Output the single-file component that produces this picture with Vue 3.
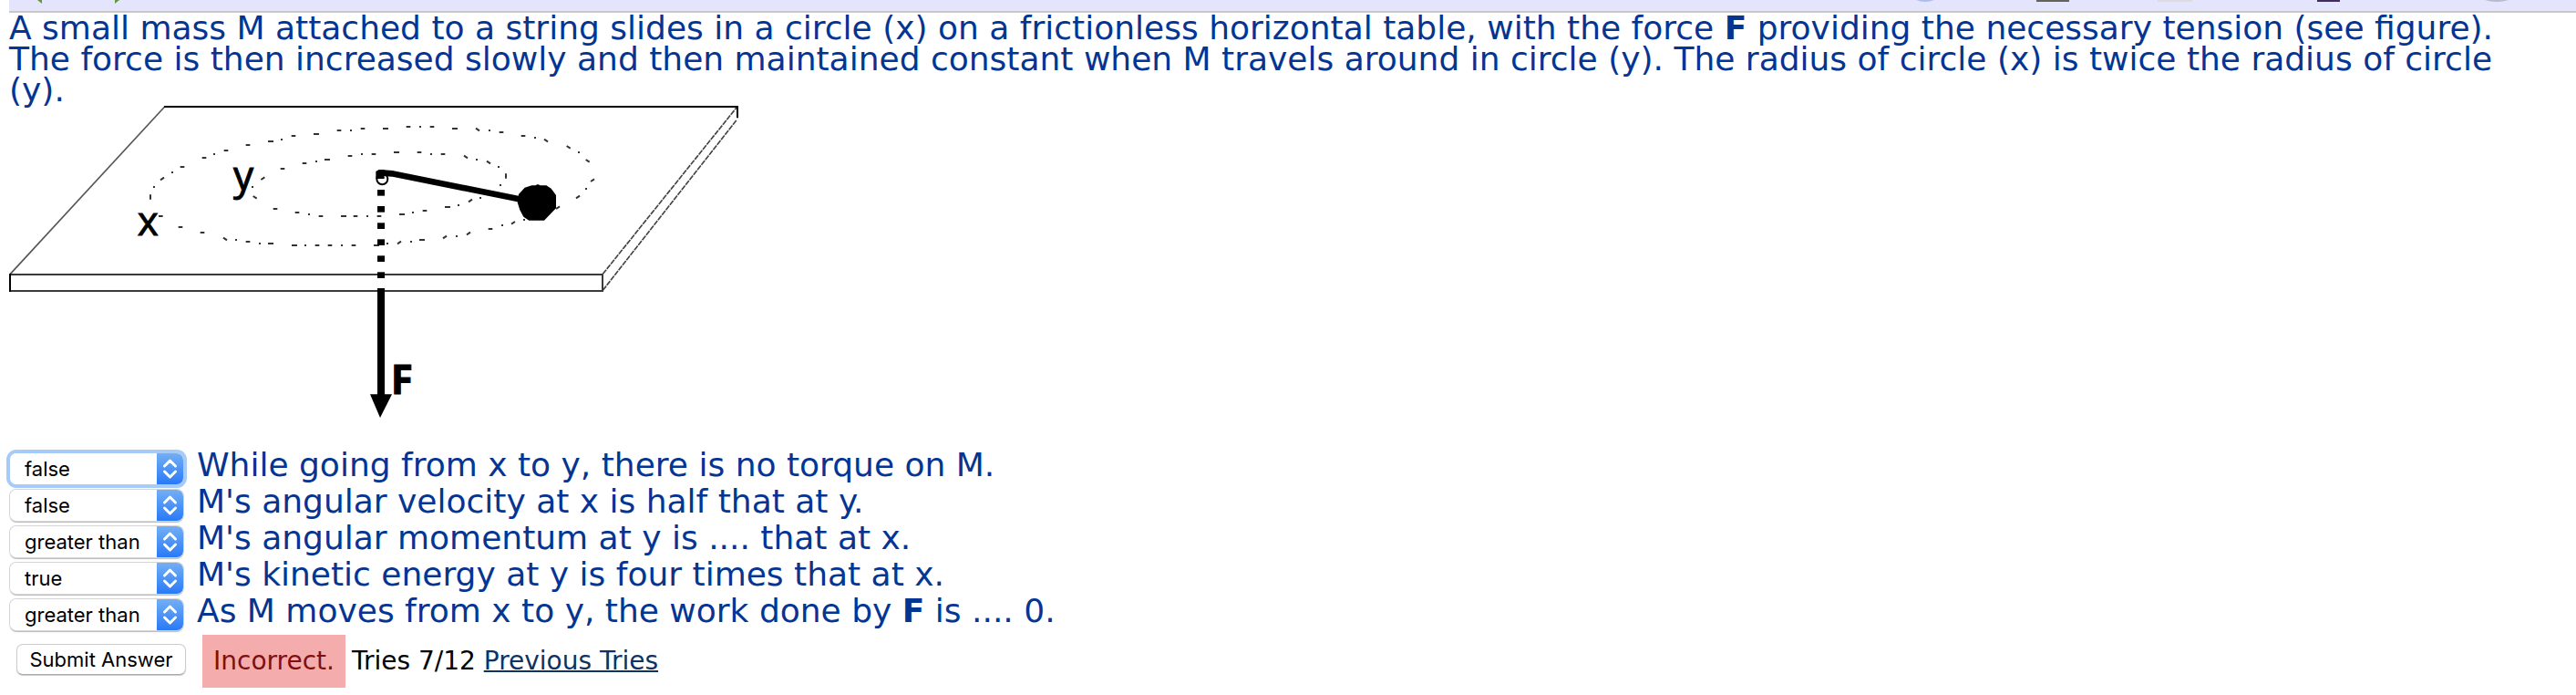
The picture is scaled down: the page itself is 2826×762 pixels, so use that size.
<script setup>
import { ref } from 'vue'

const choices = ['true', 'false', 'greater than', 'less than', 'equal to']

const questions = ref([
  { id: 'torque', answer: 'false', focused: true, parts: ['While going from x to y, there is no torque on M.'] },
  { id: 'velocity', answer: 'false', parts: ["M's angular velocity at x is half that at y."] },
  { id: 'momentum', answer: 'greater than', parts: ["M's angular momentum at y is .... that at x."] },
  { id: 'energy', answer: 'true', parts: ["M's kinetic energy at y is four times that at x."] },
  { id: 'work', answer: 'greater than', parts: ['As M moves from x to y, the work done by ', 'F', ' is .... 0.'] }
])

// Orbit marks: [x, y, kind]
// o = dot, d = dash, w = wide dash, v = vertical, s = rising, b = falling
const marks = [
  [495, 348, 'v'], [507, 315, 'o'], [534, 288, 's'], [567, 267, 'o'], [600, 249, 'd'],
  [672, 219, 'd'], [705, 207, 'o'], [744, 195, 'd'], [816, 177, 'd'], [891, 165, 'w'],
  [927, 159, 'o'], [966, 147, 'd'], [1041, 141, 'w'], [1116, 129, 'd'], [1155, 129, 'o'],
  [1194, 123, 'd'], [1269, 123, 'w'], [1344, 117, 'd'], [1383, 117, 'o'], [1422, 117, 'd'],
  [1497, 123, 'w'], [1572, 126, 'b'], [1611, 129, 'o'], [1650, 135, 'd'], [1722, 147, 'd'],
  [1761, 153, 'o'], [1797, 162, 'b'], [1871, 184, 'b'], [1905, 201, 'o'], [1934, 229, 'b'],
  [1950, 293, 's'], [1929, 321, 'o'], [1902, 348, 's'], [1836, 383, 's'], [1725, 423, 'o'],
  [1689, 433, 's'], [1653, 441, 'o'], [1614, 453, 'd'], [1542, 468, 's'], [1503, 477, 'o'],
  [1464, 480, 's'], [1389, 489, 'w'], [1353, 495, 'o'], [1314, 498, 's'], [1275, 501, 'o'],
  [1239, 507, 'w'], [1164, 507, 'd'], [1125, 507, 'o'], [1086, 507, 'd'], [1044, 507, 'd'],
  [1005, 507, 'o'], [969, 507, 'w'], [891, 501, 'w'], [855, 501, 'o'], [816, 495, 'd'],
  [777, 489, 'o'], [741, 486, 'b'], [666, 465, 'd'], [594, 447, 'd'], [529, 411, 'd'],
  [831, 315, 'o'], [865, 287, 's'], [930, 255, 'd'], [1002, 237, 'd'], [1041, 231, 'o'],
  [1077, 225, 'w'], [1152, 213, 'd'], [1191, 207, 'o'], [1230, 207, 'd'], [1305, 201, 'w'],
  [1380, 201, 'd'], [1419, 207, 'o'], [1458, 207, 'd'], [1533, 216, 'b'], [1569, 225, 'o'],
  [1608, 234, 'b'], [1641, 249, 'o'], [1665, 279, 'v'], [1647, 309, 'o'], [1581, 351, 'o'],
  [1548, 360, 's'], [1509, 375, 'o'], [1473, 381, 'w'], [1398, 393, 'd'], [1359, 399, 'o'],
  [1323, 405, 'w'], [1248, 411, 'd'], [1209, 411, 'o'], [1170, 411, 'd'], [1131, 411, 'w'],
  [1056, 411, 'd'], [1017, 405, 'o'], [978, 399, 'd'], [906, 387, 'd'], [839, 349, 'b']
]

const strokes = {
  o: 'm-3 0h6',
  d: 'm-7 0h14',
  w: 'm-9 0h18',
  v: 'm0 -8v16',
  s: 'm-6 4l12 -8',
  b: 'm-6 -4l12 8'
}

const orbitPath = marks.map(([x, y, kind]) => `M${x} ${y}${strokes[kind]}`).join('')
const cordTops = [324, 378, 433, 487, 541, 595]
</script>

<template>
  <main class="page">
    <div class="toolbar">
      <svg class="tool arrows" viewBox="0 0 100 5" aria-hidden="true">
        <path d="M6 0h5v4z" fill="#659640" />
        <path d="M91 0h5l-5 4z" fill="#659640" />
      </svg>
      <svg class="tool icons" viewBox="0 0 660 3" aria-hidden="true">
        <path d="M6 0h20q-10 4-20 0z" fill="#adbdf0" />
        <path d="M138 0h36v2h-36z" fill="#65645b" />
        <path d="M271 0h38v2h-38z" fill="#dcdce0" />
        <path d="M446 0h25v2h-25z" fill="#432c62" />
        <path d="M630 0h26q-13 4-26 0z" fill="#b9b9cc" />
      </svg>
    </div>

    <p class="problem">
      A small mass M attached to a string slides in a circle (x) on a frictionless horizontal table,
      with the force <b>F</b> providing the necessary tension (see figure).<br>
      The force is then increased slowly and then maintained constant when M travels around in circle
      (y). The radius of circle (x) is twice the radius of circle (y).
    </p>

    <svg class="figure" viewBox="30 48 2400 1032" role="img" aria-label="Mass on a table pulled by a force through a string">
      <g fill="none">
        <path d="M34 601L542 51" stroke="#555" stroke-width="5" />
        <path d="M1984 601L2424 54M1984 655L2424 95" stroke="#444" stroke-width="5" stroke-dasharray="18 3" />
        <path d="M540 51H2428" stroke="#000" stroke-width="6" />
        <path d="M2427 48V88" stroke="#000" stroke-width="6" />
        <path d="M33 603H1983V657H33" stroke="#3a3a3a" stroke-width="6" />
        <path d="M33 600V660" stroke="#000" stroke-width="6" />
        <path :d="orbitPath" stroke="#333" stroke-width="6" />
        <circle cx="1258" cy="289" r="18" stroke="#000" stroke-width="6" />
        <path d="M1254 268L1290 271L1716 356" stroke="#000" stroke-width="20" />
      </g>
      <path d="M1237 264l10 -6h18v30h-28z" />
      <rect v-for="top in cordTops" :key="top" x="1242" :y="top" width="24" height="20" />
      <path d="M1242 648h24v349h24l-39 77l-33 -77h24z" />
      <path d="M1750 310h12l8 -4l8 4h20l16 10l16 22v43l-29 30l-10 10h-50l-18 -12l-12 -22l-8 -26l4 -26l20 -22z" />
      <text class="mark" x="452" y="473">x</text>
      <text class="mark" x="768" y="325">y</text>
      <text class="mark strong" x="1286" y="995">F</text>
    </svg>

    <form @submit.prevent>
      <div v-for="q in questions" :key="q.id" class="question">
        <span class="picker" :class="{ focused: q.focused }">
          <select :id="q.id" v-model="q.answer">
            <option v-for="c in choices" :key="c">{{ c }}</option>
          </select>
          <svg class="chevrons" viewBox="0 0 29 34" aria-hidden="true">
            <path d="M8.500 14l6 -6l6 6M8.500 20l6 6l6 -6" />
          </svg>
        </span>
        <label :for="q.id"><template v-for="(part, i) in q.parts" :key="i"><b v-if="i === 1">{{ part }}</b><template v-else>{{ part }}</template></template></label>
      </div>

      <div class="result">
        <button type="submit">Submit Answer</button>
        <strong class="verdict">Incorrect.</strong>
        <span class="tries">Tries 7/12 <a href="#">Previous Tries</a></span>
      </div>
    </form>
  </main>
</template>

<style>
body {
  margin: 0;
  background: #fff;
}
</style>

<style scoped>
.page {
  padding-left: 10px;
  font-family: Verdana, "DejaVu Sans", sans-serif;
  color: #053592;
}

.toolbar {
  display: flex;
  justify-content: space-between;
  align-items: flex-start;
  box-sizing: border-box;
  height: 14px;
  padding: 0 70px 0 25px;
  background: #e4e4fc;
  border-bottom: 2px solid #c8c8c8;
}

.tool {
  display: block;
  overflow: visible;
}

.arrows {
  width: 100px;
  height: 5px;
}

.icons {
  width: 660px;
  height: 3px;
}

.problem {
  margin: 0;
  padding-right: 40px;
  font-size: 36px;
  line-height: 34px;
}

.figure {
  display: block;
  width: 800px;
  max-width: 100%;
  margin-bottom: 34px;
}

.mark {
  font-family: "Open Sans", sans-serif;
  font-size: 132px;
  fill: #000;
  stroke: #000;
  stroke-width: 3px;
}

.strong {
  font-weight: 700;
}

.question {
  display: flex;
  align-items: flex-start;
  gap: 15px;
  min-height: 40px;
}

.question label {
  font-size: 36px;
  line-height: 32px;
}

.picker {
  display: grid;
  grid-template-columns: 161px 29px;
  flex: none;
  height: 34px;
  margin: 3px 0 0 1px;
  border-radius: 7px;
  box-shadow: 0 0 0 1px #d4d4d4, 0 2px 1px #bbb;
}

.picker.focused {
  box-shadow: 0 0 0 4px #a6cbf8;
}

select {
  grid-area: 1 / 1 / 2 / 3;
  appearance: none;
  width: 100%;
  height: 34px;
  margin: 0;
  padding: 0 32px 0 16px;
  border: 0;
  border-radius: 7px;
  outline: none;
  background: #fff;
  color: #000;
  font: 22px/34px Inter, sans-serif;
}

.chevrons {
  grid-area: 1 / 2;
  width: 29px;
  height: 34px;
  border-radius: 0 7px 7px 0;
  background: linear-gradient(#73aff5, #2a7af7);
  pointer-events: none;
}

.chevrons path {
  fill: none;
  stroke: #fff;
  stroke-width: 3;
  stroke-linecap: round;
  stroke-linejoin: round;
}

.result {
  display: flex;
  align-items: center;
  margin: 2px 0 0 8px;
  font-size: 28px;
  line-height: 34px;
  color: #000;
}

button {
  width: 186px;
  height: 34px;
  margin: 0 18px 4px 0;
  padding: 0;
  border: 1px solid #ccc;
  border-bottom-color: #aaa;
  border-radius: 7px;
  background: #fff;
  box-shadow: 0 1px 1px #ccc;
  color: #000;
  font: 22px/30px Inter, sans-serif;
  white-space: nowrap;
}

.verdict {
  margin-right: 7px;
  padding: 12px;
  background: #f5acac;
  color: #7f1010;
  font-weight: 400;
}

a {
  color: #0f3360;
  text-decoration-thickness: 2px;
}
</style>
